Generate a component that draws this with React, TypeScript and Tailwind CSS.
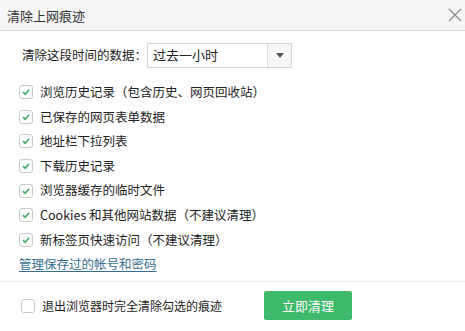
const font = { fontFamily: "'Noto Sans CJK SC', 'Noto Sans', sans-serif" }

const items = [
  '浏览历史记录（包含历史、网页回收站）',
  '已保存的网页表单数据',
  '地址栏下拉列表',
  '下载历史记录',
  '浏览器缓存的临时文件',
  'Cookies 和其他网站数据（不建议清理）',
  '新标签页快速访问（不建议清理）',
]

function CheckBox({ checked }: { checked: boolean }) {
  return (
    <span className="w-[14px] h-[14px] shrink-0 rounded-[3px] border border-[#c9c9c9] bg-white flex items-center justify-center">
      {checked && (
        <svg width="10" height="10" viewBox="0 0 10 10">
          <path d="M2 5.2 L4.2 7.3 L8 2.8" fill="none" stroke="#3fae68" strokeWidth="1.6" />
        </svg>
      )}
    </span>
  )
}

export default function App() {
  return (
    <div className="w-[465px] h-[331px] bg-white flex flex-col text-[#222]" style={font}>
      <div className="h-[31px] bg-[#f5f5f5] border-b border-[#dcdcdc] flex items-center justify-between pl-[7px] pr-[2px]">
        <span className="text-[13px] text-[#333] leading-none">清除上网痕迹</span>
        <svg width="16" height="16" viewBox="0 0 16 16">
          <path d="M2 2 L14 14 M14 2 L2 14" stroke="#888" strokeWidth="1.2" />
        </svg>
      </div>

      <div className="flex items-center mt-[12px] pl-[22px]">
        <span className="text-[12.5px] w-[125px] whitespace-nowrap">清除这段时间的数据：</span>
        <div className="w-[145px] h-[25px] border border-[#d6d6d6] flex">
          <span className="flex-1 text-[13px] pl-[5px] leading-[22px]">过去一小时</span>
          <span className="w-[24px] border-l border-[#dadada] bg-[#f7f7f7] flex items-center justify-center">
            <svg width="8" height="5" viewBox="0 0 8 5">
              <path d="M0 0 L8 0 L4 5 Z" fill="#555" />
            </svg>
          </span>
        </div>
      </div>

      <div className="flex flex-col gap-[10px] mt-[17px] pl-[19px]">
        {items.map(t => (
          <div key={t} className="flex items-center gap-[7px] h-[14.6px]">
            <CheckBox checked />
            <span className="text-[12.5px] leading-none whitespace-nowrap">{t}</span>
          </div>
        ))}
      </div>

      <a className="mt-[11px] ml-[19px] text-[12.5px] text-[#356f8f] underline underline-offset-2 leading-none w-fit">
        管理保存过的帐号和密码
      </a>

      <div className="mt-[10px] border-t border-[#ececec] flex items-center pl-[21px] h-[49px]">
        <CheckBox checked={false} />
        <span className="ml-[7px] text-[12px] w-[222px] whitespace-nowrap">退出浏览器时完全清除勾选的痕迹</span>
        <button className="w-[88px] h-[29px] bg-[#3dba6b] text-white text-[13px] rounded-[2px]">
          立即清理
        </button>
      </div>
    </div>
  )
}
